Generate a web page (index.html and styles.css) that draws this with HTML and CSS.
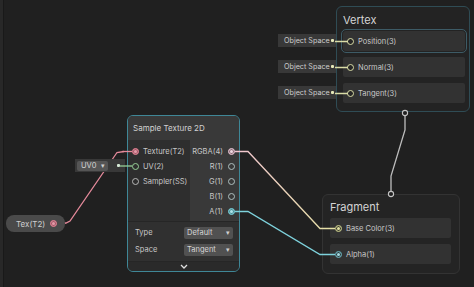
FILE: index.html
```html
<!DOCTYPE html>
<html>
<head>
<meta charset="utf-8">
<link rel="stylesheet" href="styles.css">
</head>
<body>
<div class="canvas">
  <div class="edge"></div>

  <svg class="wires under" width="474" height="287" viewBox="0 0 474 287">
    <path d="M58,224 L66,223 L70,221 L117,152.5 L124,151.5" stroke="#e58a9b" stroke-width="1.3" fill="none"/>
  </svg>

  <div class="prop tex">
    <span class="dot green"></span>
    <span class="prop-label">Tex(T2)</span>
    <span class="port p-pink"></span>
  </div>

  <div class="uvnode">
    <div class="uvdrop"><span>UV0</span><span class="arr">▾</span></div>
    <span class="dot light"></span>
  </div>

  <div class="obj" style="top:34px"><span>Object Space</span><span class="dot yel"></span></div>
  <div class="obj" style="top:60px"><span>Object Space</span><span class="dot yel"></span></div>
  <div class="obj" style="top:86px"><span>Object Space</span><span class="dot yel"></span></div>

  <div class="node vertex">
    <div class="ctx-title">Vertex</div>
    <div class="ctx-rows">
      <div class="ctx-row sel"><span class="port p-ring-y"></span><span>Position(3)</span></div>
      <div class="ctx-row"><span class="port p-ring-y"></span><span>Normal(3)</span></div>
      <div class="ctx-row"><span class="port p-ring-y"></span><span>Tangent(3)</span></div>
    </div>
  </div>

  <div class="node fragment">
    <div class="ctx-title">Fragment</div>
    <div class="ctx-rows">
      <div class="ctx-row"><span class="port p-yel"></span><span>Base Color(3)</span></div>
      <div class="ctx-row"><span class="port p-cyan"></span><span>Alpha(1)</span></div>
    </div>
  </div>

  <div class="node sample">
    <div class="s-title">Sample Texture 2D</div>
    <div class="s-ports">
      <div class="s-in">
        <div class="s-row"><span class="port p-pink"></span><span>Texture(T2)</span></div>
        <div class="s-row"><span class="port p-green"></span><span>UV(2)</span></div>
        <div class="s-row"><span class="port p-grey"></span><span>Sampler(SS)</span></div>
      </div>
      <div class="s-out">
        <div class="s-row out"><span>RGBA(4)</span><span class="port p-rgba"></span></div>
        <div class="s-row out"><span>R(1)</span><span class="port p-grey2"></span></div>
        <div class="s-row out"><span>G(1)</span><span class="port p-grey2"></span></div>
        <div class="s-row out"><span>B(1)</span><span class="port p-grey2"></span></div>
        <div class="s-row out"><span>A(1)</span><span class="port p-cyan2"></span></div>
      </div>
    </div>
    <div class="s-settings">
      <div class="set-row"><span class="set-label">Type</span><div class="drop"><span>Default</span><span class="arr">▾</span></div></div>
      <div class="set-row"><span class="set-label">Space</span><div class="drop"><span>Tangent</span><span class="arr">▾</span></div></div>
    </div>
    <div class="s-foot">
      <svg width="8" height="5" viewBox="0 0 8 5"><path d="M1,1 L4,4 L7,1" stroke="#e0e0e0" stroke-width="1.3" fill="none"/></svg>
    </div>
  </div>

  <svg class="wires over" width="474" height="287" viewBox="0 0 474 287">
    <defs>
      <linearGradient id="gRgba" x1="234" y1="0" x2="336" y2="0" gradientUnits="userSpaceOnUse">
        <stop offset="0" stop-color="#f2c4d2"/>
        <stop offset="1" stop-color="#e4e2a2"/>
      </linearGradient>
    </defs>
    <path d="M122,151.5 L132,151.5" stroke="#e58a9b" stroke-width="1.3" fill="none"/>
    <path d="M120,166 L132,166" stroke="#96d096" stroke-width="1.3" fill="none"/>
    <path d="M335,41.5 L348,41.5 M335,67.5 L348,67.5 M335,93.5 L348,93.5" stroke="#d9dca6" stroke-width="1.3" fill="none"/>
    <path d="M235,151.5 L248,151.5 L320,228.5 L335,228.5" stroke="url(#gRgba)" stroke-width="1.3" fill="none"/>
    <path d="M235,211.5 L248,211.5 L320,254.5 L335,254.5" stroke="#7ed2dc" stroke-width="1.3" fill="none"/>
    <path d="M405,116 L405,130 L391,176 L391,191" stroke="#bdbdbd" stroke-width="1.3" fill="none"/>
    <circle cx="405" cy="113" r="2.6" fill="#202020" stroke="#c4c4c4" stroke-width="1.1"/>
    <circle cx="391" cy="194" r="2.6" fill="#202020" stroke="#c4c4c4" stroke-width="1.1"/>
  </svg>
</div>
</body>
</html>
```

FILE: styles.css
```css
* { box-sizing: border-box; }
html, body { margin: 0; padding: 0; }
body {
  width: 474px;
  height: 287px;
  overflow: hidden;
  background: #202020;
  font-family: "Inter", "Noto Sans", "Liberation Sans", sans-serif;
  color: #c6c6c6;
}
.canvas {
  position: relative;
  width: 474px;
  height: 287px;
  overflow: hidden;
}
.edge {
  position: absolute;
  left: 0; top: 0;
  width: 4px; height: 287px;
  background: #282828;
  border-right: 1px solid #191919;
}
.wires { position: absolute; left: 0; top: 0; }
.wires.under { z-index: 0; }
.wires.over { z-index: 5; pointer-events: none; }

.dot {
  display: inline-block;
  width: 3px; height: 3px;
  border-radius: 1px;
}
.dot.green { background: #8fd08f; }
.dot.light { background: #d6ead6; }
.dot.yel { background: #e6e8b8; }

.port {
  display: inline-block;
  flex: none;
  width: 7px; height: 7px;
  border-radius: 50%;
  border: 1px solid #b0b0b0;
  background: #2a2a2a;
}
.p-ring-y { border-color: #d9dca6; background: #262626; }
.p-yel { border-color: #cfd290; background: #3a3a2a; box-shadow: inset 0 0 0 1px #3a3a30, inset 0 0 0 3px #e2e2a2; }
.p-cyan { border-color: #6db6c2; background: #2a3a3c; box-shadow: inset 0 0 0 1px #2c3a3c, inset 0 0 0 3px #a6dde4; }
.p-pink { border-color: #d9788a; background: #e49aa8; box-shadow: inset 0 0 0 1px #a05a68; }
.p-green { border-color: #96d096; background: #2e2e2e; }
.p-grey { border-color: #b8b8b8; background: #2e2e2e; }
.p-grey2 { border-color: #aebfbf; background: #393939; }
.p-rgba { border-color: #d8b6c4; background: #f0dae2; box-shadow: inset 0 0 0 1px #8a6a76; }
.p-cyan2 { border-color: #6cc4ce; background: #b0e4ea; box-shadow: inset 0 0 0 1px #4a8c94; }

/* property node */
.prop {
  position: absolute;
  left: 6px; top: 215px;
  width: 59px; height: 17px;
  background: #4a4a4a;
  border-radius: 8px;
  display: flex;
  align-items: center;
  padding: 0 9px 0 5px;
  gap: 5px;
  z-index: 1;
}
.prop-label { flex: 1; font-size: 8px; color: #cfcfcf; }

/* UV0 node */
.uvnode {
  position: absolute;
  left: 75px; top: 159px;
  width: 50px; height: 13px;
  background: #383838;
  display: flex;
  align-items: center;
  padding: 0 5px 0 2px;
  gap: 9px;
  z-index: 1;
}
.uvdrop {
  width: 31px; height: 10px;
  background: #555555;
  border-radius: 2px;
  display: flex;
  align-items: center;
  justify-content: space-between;
  padding: 0 3px 0 4px;
  font-size: 7.5px;
  color: #d4d4d4;
}
.arr { font-size: 7px; color: #d0d0d0; }

/* object space inputs */
.obj {
  position: absolute;
  left: 278px;
  width: 58px; height: 13px;
  background: #383838;
  display: flex;
  align-items: center;
  justify-content: space-between;
  padding: 0 2px 0 6px;
  font-size: 7.2px;
  color: #cdcdcd;
  z-index: 1;
}

/* context nodes */
.node {
  position: absolute;
  border-radius: 6px;
  z-index: 2;
}
.vertex {
  left: 336px; top: 6px;
  width: 134px; height: 106px;
  border: 1px solid #2f4c55;
  background: #232323;
  padding: 0 4px 0 6px;
  display: flex;
  flex-direction: column;
}
.fragment {
  left: 322px; top: 194px;
  width: 138px; height: 80px;
  border: 1px solid #333333;
  background: #242424;
  padding: 0 8px 0 7px;
  display: flex;
  flex-direction: column;
}
.ctx-title {
  height: 24px;
  display: flex;
  align-items: center;
  font-size: 11px;
  color: #d4d4d4;
  padding-top: 2px;
}
.fragment .ctx-title { height: 23px; padding-top: 1px; }
.ctx-rows {
  display: flex;
  flex-direction: column;
  gap: 6px;
}
.ctx-row {
  height: 20px;
  background: #323232;
  border-radius: 2px;
  display: flex;
  align-items: center;
  padding-left: 4px;
  gap: 4px;
  font-size: 7.5px;
  color: #c8c8c8;
}
.fragment .ctx-row { padding-left: 5px; gap: 4px; }
.ctx-row.sel {
  outline: 1px solid #3d5b66;
  outline-offset: 1px;
  border-radius: 3px;
}

/* sample texture node */
.sample {
  left: 127px; top: 115px;
  width: 113px; height: 157px;
  border: 1px solid #3f8797;
  background: #2e2e2e;
  overflow: hidden;
  display: flex;
  flex-direction: column;
}
.s-title {
  height: 24px;
  background: #393939;
  display: flex;
  align-items: center;
  padding-left: 5px;
  font-size: 8px;
  color: #d2d2d2;
}
.s-ports {
  height: 81px;
  display: flex;
}
.s-in {
  width: 62px;
  background: #2e2e2e;
  padding-top: 4px;
}
.s-out {
  flex: 1;
  background: #393939;
  padding-top: 4px;
}
.s-row {
  height: 15px;
  display: flex;
  align-items: center;
  padding-left: 4px;
  gap: 4px;
  font-size: 7.5px;
  color: #c8c8c8;
}
.s-row.out {
  justify-content: flex-end;
  padding: 0 4px 0 0;
  gap: 5px;
}
.s-settings {
  height: 40px;
  background: #303030;
  border-top: 1px solid #262626;
  padding-top: 2px;
}
.set-row {
  height: 17px;
  display: flex;
  align-items: center;
  padding-left: 7px;
  font-size: 7.5px;
  color: #c8c8c8;
}
.set-label { width: 49px; }
.drop {
  width: 49px; height: 12px;
  background: #515151;
  border-radius: 2px;
  display: flex;
  align-items: center;
  justify-content: space-between;
  padding: 0 3px 0 3px;
  color: #d6d6d6;
}
.s-foot {
  flex: 1;
  background: #2a2a2a;
  border-top: 1px solid #262626;
  display: flex;
  align-items: center;
  justify-content: center;
}
```
